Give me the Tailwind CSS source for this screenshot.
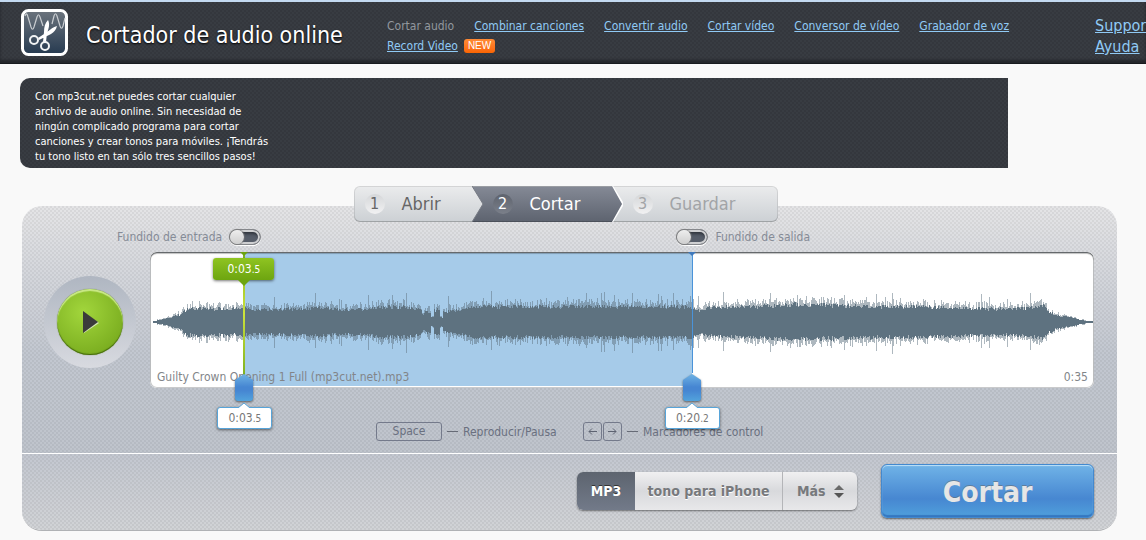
<!DOCTYPE html>
<html lang="es">
<head>
    <meta charset="UTF-8">
    <meta name="viewport" content="width=device-width, initial-scale=1.0">
    <title>Cortador de audio online</title>
    <script src="https://cdn.jsdelivr.net/npm/@tailwindcss/browser@4"></script>
</head>
<body class="bg-[#f9f9f9] font-['DejaVu_Sans_Condensed','Noto_Sans',sans-serif] overflow-x-hidden">

<!-- Header -->
<header class="h-16 flex items-start pl-[21px] border-t-2 border-t-[#c3d9f0] border-b border-b-[#181b1f] bg-[#383c42] bg-[conic-gradient(#0000_25%,#00000014_0_50%,#0000_0_75%,#00000014_0)] bg-[length:4px_4px] shadow-[inset_0_-3px_3px_#24272b] overflow-hidden">
    <a href="#" aria-label="mp3cut" class="shrink-0 mt-[7px]">
        <svg class="w-[47px] h-[47px]" viewBox="0 0 47 47" fill="none">
            <defs>
                <linearGradient id="logo" x2="0" y2="1">
                    <stop offset="0" stop-color="#6c747d"/>
                    <stop offset="1" stop-color="#263a50"/>
                </linearGradient>
            </defs>
            <rect x="1.5" y="1.5" width="44" height="44" rx="6" fill="url(#logo)" stroke="#fff" stroke-width="3"/>
            <path d="M4 7c1-3 2-3 3 1l3 10c1 3 2 3 3 0l3-10c1-3 2-3 3 0l3 9M31 15l2-8c1-3 2-3 3 0l3 10c1 3 2 3 3 0l2-8" stroke="#c9cdd1" stroke-width="1.2"/>
            <path d="M27 11c2 4 1 8-1 13l-1 9h-3l1-10c0-5 1-9 4-12zM36 17c-1 4-3 6-6 8l-12 6-1-2 9-6c4-3 6-5 10-6z" fill="#fff"/>
            <circle cx="13" cy="31" r="4" stroke="#f1f3f4" stroke-width="2"/>
            <circle cx="24" cy="37" r="4" stroke="#f1f3f4" stroke-width="2"/>
        </svg>
    </a>
    <h1 class="ml-[18px] mt-[17px] w-[301px] shrink-0 text-[23px] leading-8 text-white whitespace-nowrap [text-shadow:0_1px_2px_#000]">Cortador de audio online</h1>
    <nav class="flex-1 mt-[14px] flex flex-wrap gap-x-5 text-xs leading-5 text-[#90caf5] whitespace-nowrap">
        <span class="text-[#92989e]">Cortar audio</span>
        <a href="#" class="underline">Combinar canciones</a>
        <a href="#" class="underline">Convertir audio</a>
        <a href="#" class="underline">Cortar vídeo</a>
        <a href="#" class="underline">Conversor de vídeo</a>
        <a href="#" class="underline">Grabador de voz</a>
        <span class="flex items-center gap-[6px]">
            <a href="#" class="underline">Record Video</a>
            <span class="h-[14px] px-1 rounded-[3px] bg-linear-to-b from-[#ff8a35] to-[#fb6500] font-['Liberation_Sans',sans-serif] text-[10px] leading-[14px] text-white">NEW</span>
        </span>
    </nav>
    <div class="mt-[13px] ml-7 w-[51px] shrink-0 flex flex-col text-base leading-[21px] text-[#90caf5] underline">
        <a href="#">Support</a>
        <a href="#">Ayuda</a>
    </div>
</header>

<!-- Intro -->
<section class="mt-[14px] ml-5 mr-[138px] h-[90px] pl-[15px] pt-[11px] rounded-l-[10px] bg-[#383c42] bg-[conic-gradient(#0000_25%,#00000014_0_50%,#0000_0_75%,#00000014_0)] bg-[length:4px_4px]">
    <p class="text-[11px] leading-[15px] text-white whitespace-nowrap">Con mp3cut.net puedes cortar cualquier<br>archivo de audio online. Sin necesidad de<br>ningún complicado programa para cortar<br>canciones y crear tonos para móviles. ¡Tendrás<br>tu tono listo en tan sólo tres sencillos pasos!</p>
</section>

<main class="ml-[22px] mr-[29px] mt-[18px]">
    <!-- Steps -->
    <div class="relative z-10 -mb-4 pr-2 flex justify-center">
        <ol class="flex w-[424px] h-9 rounded-md bg-linear-to-b from-[#ebeced] to-[#ccd0d4] shadow-[inset_0_0_0_1px_#00000018,inset_0_-1px_0_#00000022] text-lg leading-9 text-[#666] [text-shadow:0_1px_0_#fff]">
            <li class="w-[118px]">
                <button class="w-full flex items-center pl-[11px]">
                    <span class="w-5 h-5 rounded-full bg-linear-to-b from-[#d5d7d9] to-[#f1f1f2] text-base leading-5 text-center">1</span>
                    <span class="ml-[17px]">Abrir</span>
                </button>
            </li>
            <li class="relative w-[151px] text-white [text-shadow:0_-1px_0_#333]">
                <svg class="absolute inset-0 w-full h-full" viewBox="0 0 151 36" preserveAspectRatio="none">
                    <defs>
                        <linearGradient id="step" x2="0" y2="1">
                            <stop offset="0" stop-color="#858a96"/>
                            <stop offset="1" stop-color="#5d636f"/>
                        </linearGradient>
                    </defs>
                    <path d="M140 0l11 18-11 18" fill="none" stroke="#fff" stroke-width="2"/>
                    <path d="M0 0h140l10 18-10 18H0l11-18z" fill="url(#step)"/>
                    <path d="M0 .5h140" stroke="#9a9da3"/>
                    <path d="M0 35.5h140" stroke="#4b505a"/>
                    <path d="M0 0l11 18-11 18" fill="none" stroke="#777b84"/>
                </svg>
                <button class="relative w-full flex items-center pl-[21px]" aria-current="step">
                    <span class="w-5 h-5 rounded-full bg-linear-to-b from-[#5e636e] to-[#7b808a] text-base leading-5 text-center">2</span>
                    <span class="ml-[17px]">Cortar</span>
                </button>
            </li>
            <li class="flex-1 text-[#a2a4a7]">
                <button class="w-full flex items-center pl-[10px]">
                    <span class="w-5 h-5 rounded-full bg-linear-to-b from-[#d5d7d9] to-[#f1f1f2] text-base leading-5 text-center">3</span>
                    <span class="ml-[17px]">Guardar</span>
                </button>
            </li>
        </ol>
    </div>

    <div class="rounded-[20px] overflow-hidden border-b border-[#b0b2b5] text-xs text-[#858b96]">
        <!-- Editor -->
        <div class="h-[247px] pt-[22px] bg-[conic-gradient(#0000_25%,#0000000d_0_50%,#0000_0_75%,#0000000d_0),linear-gradient(#e4e4e6,#c2c7d0_60%,#bfc4cc)] bg-[length:4px_4px,100%_100%]">
            <div class="flex justify-between items-center h-[18px] pl-[95px] pr-[307px]">
                <div class="flex items-center gap-[7px]">
                    <label for="fade-in">Fundido de entrada</label>
                    <input id="fade-in" type="checkbox" class="appearance-none w-8 h-4 rounded-full border border-[#85878b] bg-[#565d69] shadow-[inset_0_0_0_2px_#cfd0d2,inset_0_4px_3px_#30353d,0_1px_0_#fff] before:block before:w-[14px] before:h-[14px] before:rounded-full before:bg-linear-to-b before:from-[#eee] before:to-[#cfcfcf] before:shadow-[0_0_1px_1px_#777a]">
                </div>
                <div class="flex items-center gap-[7px]">
                    <input id="fade-out" type="checkbox" class="appearance-none w-8 h-4 rounded-full border border-[#85878b] bg-[#565d69] shadow-[inset_0_0_0_2px_#cfd0d2,inset_0_4px_3px_#30353d,0_1px_0_#fff] before:block before:w-[14px] before:h-[14px] before:rounded-full before:bg-linear-to-b before:from-[#eee] before:to-[#cfcfcf] before:shadow-[0_0_1px_1px_#777a]">
                    <label for="fade-out">Fundido de salida</label>
                </div>
            </div>

            <div class="flex items-center gap-[14px] mt-[6px] pl-[22px] pr-[23px]">
                <div class="shrink-0 w-[92px] h-[92px] rounded-full p-[13px] mt-1 bg-linear-to-b from-[#afb6c1] to-[#d8dae0]">
                    <button aria-label="Reproducir" class="w-[66px] h-[66px] rounded-full bg-[radial-gradient(circle_at_40%_35%,#a2d63c,#7bae20_75%)] shadow-[inset_0_2px_1px_#cbe98a,inset_0_-1px_1px_#40640a,0_0_1px_#40640a] flex items-center justify-center">
                        <svg class="w-[18px] h-6" viewBox="0 0 18 24">
                            <path d="M3 3l15 10-15 10z" fill="#d6e9b4"/>
                            <path d="M2 1l15 11-15 11z" fill="#3b3b3b"/>
                        </svg>
                    </button>
                </div>

                <div class="relative flex-1 h-[136px]">
                    <div class="absolute inset-0 rounded-[7px] overflow-hidden bg-white">
                        <div class="absolute inset-y-0 bg-[#a6cbe9]" style="left: 10%; width: 47.4%"></div>
                        <svg id="wave" class="absolute inset-0 w-full h-full" viewBox="0 0 943 136" preserveAspectRatio="none" shape-rendering="crispEdges"></svg>
                        <div class="absolute inset-0 rounded-[7px] shadow-[inset_0_1px_1px_#5f6366,inset_0_2px_1px_#0003,inset_0_0_0_1px_#c9cacc,inset_0_-1px_0_1px_#fff]"></div>
                        <span class="absolute left-[7px] bottom-[3px] leading-4 text-[#828589]">Guilty Crown Opening 1 Full (mp3cut.net).mp3</span>
                        <span class="absolute right-[6px] bottom-[3px] leading-4 text-[#828589]">0:35</span>
                    </div>

                    <!-- Playhead -->
                    <div class="absolute top-0 h-[124px] w-0" style="left: 10%">
                        <div class="absolute -left-px top-0 w-[2px] h-full bg-linear-to-b from-[#7cb021] via-[#cde33c] to-[#7cb021]"></div>
                        <svg class="absolute -left-1 top-0 w-2 h-1" viewBox="0 0 8 4"><path d="M0 0h8L4 4z" fill="#6ca313"/></svg>
                        <div class="absolute -left-[31px] top-[6px] w-[61px] h-[22px] rounded-[3px] bg-linear-to-b from-[#8fc421] to-[#6da510] shadow-[0_1px_3px_#0008] leading-[22px] text-center text-white">0:03<span class="text-[10px]">.5</span></div>
                        <svg class="absolute -left-[6px] top-7 w-3 h-[6px]" viewBox="0 0 12 6"><path d="M0 0h12L6 6z" fill="#6da510"/></svg>
                    </div>

                    <!-- Start marker -->
                    <div class="absolute top-[121px] w-0" style="left: 10%">
                        <svg class="absolute -left-[9px] top-0 w-[18px] h-[30px] drop-shadow-[0_1px_1px_#0008]" viewBox="0 0 18 30">
                            <defs>
                                <linearGradient id="handle" x2="0" y2="1">
                                    <stop offset="0" stop-color="#6fb3e4"/>
                                    <stop offset=".48" stop-color="#4686d2"/>
                                    <stop offset=".62" stop-color="#4686d2"/>
                                    <stop offset="1" stop-color="#52a3dc"/>
                                </linearGradient>
                            </defs>
                            <path d="M9 1l9 6v18q0 3-3 3H3q-3 0-3-3V7z" fill="url(#handle)"/>
                        </svg>
                        <button class="absolute -left-[27px] top-[34px] w-[55px] h-[22px] rounded-[3px] border border-[#57a4d9] bg-white shadow-[0_1px_3px_#0008] leading-5 text-[#777]">0:03<span class="text-[10px]">.5</span></button>
                        <svg class="absolute -left-[6px] top-[29px] w-3 h-[6px]" viewBox="0 0 12 6"><path d="M0 6l6-5 6 5" fill="#fff" stroke="#57a4d9"/></svg>
                    </div>

                    <!-- End marker -->
                    <div class="absolute top-0 w-0 h-[121px]" style="left: 57.4%">
                        <div class="absolute top-0 left-0 w-px h-full bg-[#4a93d9]"></div>
                        <svg class="absolute -left-1 top-0 w-2 h-1" viewBox="0 0 8 4"><path d="M0 0h8L4 4z" fill="#3f79bb"/></svg>
                        <svg class="absolute -left-[9px] top-[121px] w-[18px] h-[30px] drop-shadow-[0_1px_1px_#0008]" viewBox="0 0 18 30"><path d="M9 1l9 6v18q0 3-3 3H3q-3 0-3-3V7z" fill="url(#handle)"/></svg>
                        <button class="absolute z-10 -left-[27px] top-[155px] w-[55px] h-[22px] rounded-[3px] border border-[#57a4d9] bg-white shadow-[0_1px_3px_#0008] leading-5 text-[#777]">0:20<span class="text-[10px]">.2</span></button>
                        <svg class="absolute z-10 -left-[6px] top-[150px] w-3 h-[6px]" viewBox="0 0 12 6"><path d="M0 6l6-5 6 5" fill="#fff" stroke="#57a4d9"/></svg>
                    </div>
                </div>
            </div>

            <!-- Keyboard hints -->
            <div class="mt-[34px] ml-[354px] flex items-center h-[19px] text-[#6a7080]">
                <kbd class="w-[66px] h-[19px] rounded-[3px] border border-[#747a8b] font-[inherit] text-xs leading-[17px] text-center">Space</kbd>
                <span class="w-[11px] h-px ml-[5px] mr-[5px] bg-[#666b76]"></span>
                <span class="w-[120px] whitespace-nowrap">Reproducir/Pausa</span>
                <kbd class="w-[19px] h-[19px] rounded-[3px] border border-[#747a8b] flex items-center justify-center">
                    <svg class="w-[9px] h-[7px]" viewBox="0 0 9 7"><path d="M9 3.500H1M4 .5l-3 3 3 3" fill="none" stroke="#5d6371"/></svg>
                </kbd>
                <kbd class="ml-px w-[19px] h-[19px] rounded-[3px] border border-[#747a8b] flex items-center justify-center">
                    <svg class="w-[9px] h-[7px]" viewBox="0 0 9 7"><path d="M0 3.500h8M5 .5l3 3-3 3" fill="none" stroke="#5d6371"/></svg>
                </kbd>
                <span class="w-[11px] h-px ml-[5px] mr-[5px] bg-[#666b76]"></span>
                <span>Marcadores de control</span>
            </div>
        </div>

        <!-- Format and submit -->
        <div class="h-[77px] flex justify-end items-start gap-6 pr-[23px] pt-[10px] border-t border-white bg-[conic-gradient(#0000_25%,#0000000d_0_50%,#0000_0_75%,#0000000d_0),linear-gradient(#c3c7d0,#d1d3d6)] bg-[length:4px_4px,100%_100%]">
            <div class="mt-2 flex h-[38px] rounded-md overflow-hidden shadow-[0_1px_2px_#0007] bg-linear-to-b from-[#f0f0f1] via-[#d8d9dc] to-[#e8e8ea] text-sm leading-[38px] font-bold text-[#77797c] [text-shadow:0_1px_0_#fff]">
                <label class="w-[58px] text-center bg-linear-to-b from-[#5d646f] to-[#727a89] text-white [text-shadow:0_-1px_0_#333]">
                    <input type="radio" name="format" class="sr-only" checked>MP3
                </label>
                <label class="w-[148px] text-center border-r border-[#b4b5b8]">
                    <input type="radio" name="format" class="sr-only">tono para iPhone
                </label>
                <div class="relative w-[74px] flex">
                    <select aria-label="Más formatos" class="appearance-none w-full h-full pl-[14px] font-bold bg-transparent">
                        <option>Más</option>
                    </select>
                    <svg class="absolute right-[13px] top-[13px] w-[10px] h-[13px]" viewBox="0 0 10 13"><path d="M0 5l5-5 5 5z" fill="#6a6a6a"/><path d="M0 8h10l-5 5z" fill="#555"/></svg>
                </div>
            </div>
            <button class="w-[213px] h-[54px] rounded-md border border-[#4389cf] bg-linear-to-b from-[#70b3e7] via-[#4787d1] via-65% to-[#50a0dc] shadow-[inset_0_1px_1px_#bfe1f8,inset_0_-2px_1px_#3577c0,0_1px_2px_#0008] text-[28px] pt-[3px] font-bold text-[#e6e6e6] [text-shadow:0_-1px_0_#6668]">Cortar</button>
        </div>
    </div>
</main>

<script>
    const wave = document.getElementById('wave');

    // Loudness envelope: [x, half height]
    const envelope = [
        [0, 0], [20, 4], [31, 7], [36, 12], [60, 12], [90, 12], [110, 11], [150, 12], [170, 13],
        [190, 11], [215, 12], [232, 14], [255, 14], [270, 11], [273, 7], [276, 10], [280, 9], [281, 4],
        [283, 4], [284, 11], [289, 11], [290, 4], [292, 4], [293, 9], [310, 11], [325, 14],
        [420, 14], [540, 14], [548, 10], [556, 13], [610, 14],
        [640, 16], [720, 14], [770, 14], [830, 12], [870, 12], [892, 15], [897, 10], [905, 6],
        [920, 4], [935, 1], [943, 1]
    ];

    let seed = 7;
    function random() {
        seed = (seed * 16807) % 2147483647;
        return seed / 2147483647;
    }

    function level(x) {
        const i = envelope.findIndex(point => point[0] > x);
        if (i < 1) return 1;
        const [x1, y1] = envelope[i - 1];
        const [x2, y2] = envelope[i];
        return y1 + (y2 - y1) * (x - x1) / (x2 - x1);
    }

    let core = '';
    let peaks = '';
    for (let x = 1; x < 942; x++) {
        const base = level(x);
        const up = Math.round(base * (0.95 + random() * 0.3));
        const down = Math.round(base * (0.95 + random() * 0.3));
        let fuzz = base * random() * 0.5;
        if (x > 90 && x < 890 && base > 9 && random() > 0.94) fuzz = 6 + random() * 9;
        fuzz = Math.round(fuzz);
        core += `M${x} ${70 - up}h1v${up + down}h-1z`;
        peaks += `M${x} ${70 - up - fuzz}h1v${up + down + fuzz * 2}h-1z`;
    }

    wave.innerHTML = `<path d="${peaks}" fill="#5e7280" opacity=".5"/><path d="${core}" fill="#5e7280"/>`;
</script>

</body>
</html>
